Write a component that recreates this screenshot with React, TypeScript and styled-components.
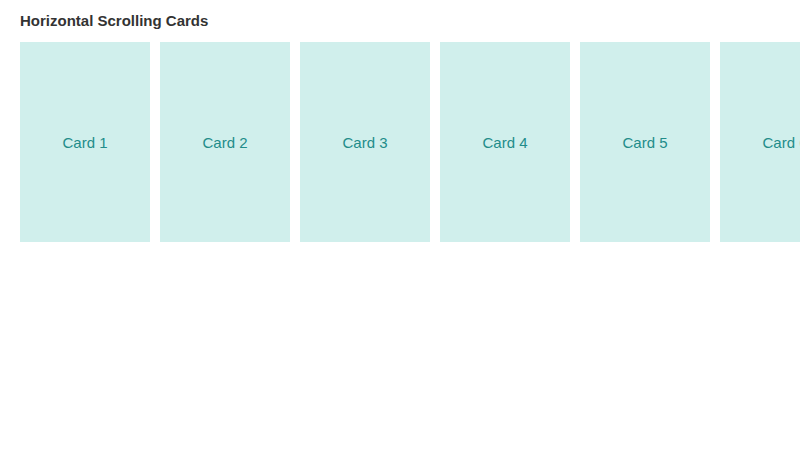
import React from 'react';

import styled, { createGlobalStyle } from 'styled-components';

const GlobalStyle = createGlobalStyle`
  html, body {
    margin: 0;
    padding: 0;
    background: #fff;
    overflow: hidden;
  }
  body {
    font-family: 'Liberation Sans', Arial, sans-serif;
  }
`;

const Page = styled.div`
  padding: 12px 0 0 20px;
`;

const Title = styled.h2`
  margin: 0 0 12px;
  font-size: 15px;
  line-height: 18px;
  font-weight: 700;
  color: #333;
`;

const Scroller = styled.div`
  display: flex;
  gap: 10px;
  overflow-x: auto;
  scrollbar-width: none;
  ::-webkit-scrollbar {
    display: none;
  }
`;

const Card = styled.div`
  flex: 0 0 130px;
  height: 200px;
  padding-top: 1px;
  box-sizing: border-box;
  display: flex;
  align-items: center;
  justify-content: center;
  background-color: #d0efec;
  color: #228c8a;
  font-size: 15px;
`;

const cards = [1, 2, 3, 4, 5, 6, 7, 8];

export default (): JSX.Element => (
  <Page>
    <GlobalStyle />
    <Title>Horizontal Scrolling Cards</Title>
    <Scroller>
      {cards.map((n) => (
        <Card key={`card-${n}`}>Card {n}</Card>
      ))}
    </Scroller>
  </Page>
);
